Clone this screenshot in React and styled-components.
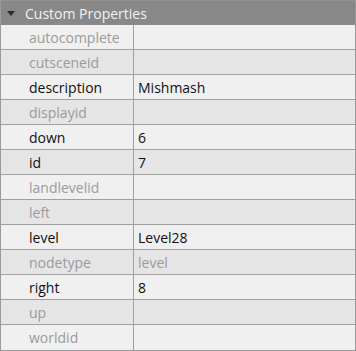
import React from 'react'
import styled, { createGlobalStyle } from 'styled-components'

const GlobalStyle = createGlobalStyle`
  html, body {
    margin: 0;
    padding: 0;
    background: #ffffff;
  }
  body {
    font-family: 'Open Sans', 'Noto Sans', sans-serif;
  }
`

const Panel = styled.div`
  width: 356px;
  height: 351px;
  box-sizing: border-box;
  border-left: 1px solid #9a9a9a;
  border-right: 1px solid #9a9a9a;
  border-bottom: 1px solid #9a9a9a;
  background: #f0f0f0;
  overflow: hidden;
`

const Header = styled.div`
  height: 25px;
  box-sizing: border-box;
  display: flex;
  align-items: center;
  gap: 10px;
  padding-left: 6px;
  background: #888888;
  border-top: 1px solid #939393;
  color: #f2f2f2;
  font-size: 14px;
`

const Triangle = styled.span`
  width: 0;
  height: 0;
  border-left: 4.5px solid transparent;
  border-right: 4.5px solid transparent;
  border-top: 5px solid #2a2a2a;
  margin-top: 1px;
`

const Row = styled.div`
  display: grid;
  grid-template-columns: 133px 1fr;
  height: 25px;
  box-sizing: border-box;
  border-bottom: 1px solid #a0a0a0;
  background: ${p => (p.$alt ? '#e5e5e5' : '#f0f0f0')};
  font-size: 14px;
  color: ${p => (p.$muted ? '#9b9b9b' : '#111111')};
  &:last-child {
    border-bottom: none;
  }
`

const Name = styled.div`
  display: flex;
  align-items: center;
  padding-left: 28px;
  border-right: 1px solid #a0a0a0;
  white-space: nowrap;
`

const Value = styled.div`
  display: flex;
  align-items: center;
  padding-left: 4px;
  white-space: nowrap;
`

const props = [
  { name: 'autocomplete', value: '', muted: true },
  { name: 'cutsceneid', value: '', muted: true },
  { name: 'description', value: 'Mishmash' },
  { name: 'displayid', value: '', muted: true },
  { name: 'down', value: '6' },
  { name: 'id', value: '7' },
  { name: 'landlevelid', value: '', muted: true },
  { name: 'left', value: '', muted: true },
  { name: 'level', value: 'Level28' },
  { name: 'nodetype', value: 'level', muted: true },
  { name: 'right', value: '8' },
  { name: 'up', value: '', muted: true },
  { name: 'worldid', value: '', muted: true },
]

const App = () => (
  <>
    <GlobalStyle />
    <Panel>
      <Header>
        <Triangle />
        Custom Properties
      </Header>
      {props.map((p, i) => (
        <Row key={p.name} $alt={i % 2 === 1} $muted={p.muted}>
          <Name>{p.name}</Name>
          <Value>{p.value}</Value>
        </Row>
      ))}
    </Panel>
  </>
)

export default App
